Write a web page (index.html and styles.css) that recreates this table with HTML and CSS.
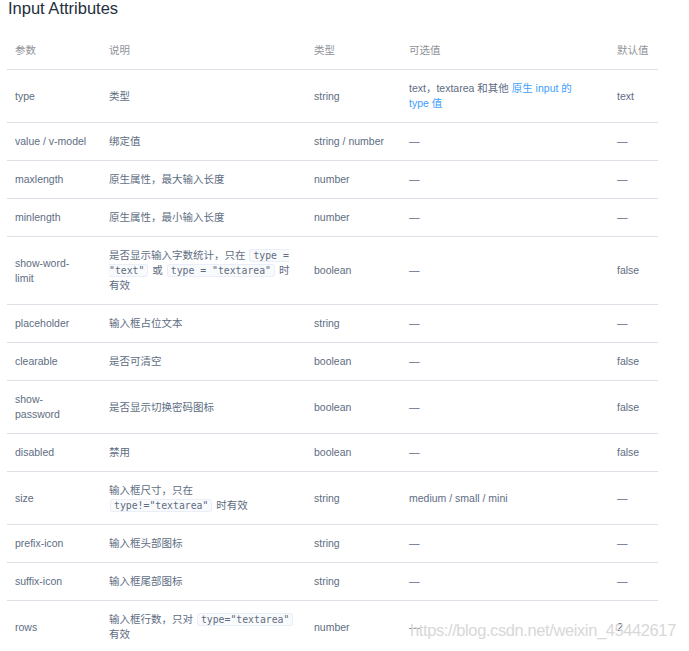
FILE: index.html
```html
<!DOCTYPE html>
<html lang="zh">
<head>
<meta charset="utf-8">
<title>Input Attributes</title>
<link rel="stylesheet" href="styles.css">
</head>
<body>
<div class="page">
  <h3 class="title">Input Attributes</h3>
  <table class="attrs">
    <colgroup>
      <col class="c1"><col class="c2"><col class="c3"><col class="c4"><col class="c5">
    </colgroup>
    <thead>
      <tr><th>参数</th><th>说明</th><th>类型</th><th>可选值</th><th>默认值</th></tr>
    </thead>
    <tbody>
      <tr><td>type</td><td>类型</td><td>string</td><td>text，textarea 和其他 <a class="link" href="#">原生 input 的 type 值</a></td><td>text</td></tr>
      <tr><td>value / v-model</td><td>绑定值</td><td>string / number</td><td>—</td><td>—</td></tr>
      <tr><td>maxlength</td><td>原生属性，最大输入长度</td><td>number</td><td>—</td><td>—</td></tr>
      <tr><td>minlength</td><td>原生属性，最小输入长度</td><td>number</td><td>—</td><td>—</td></tr>
      <tr><td>show-word-limit</td><td>是否显示输入字数统计，只在 <code>type = "text"</code> 或 <code>type = "textarea"</code> 时有效</td><td>boolean</td><td>—</td><td>false</td></tr>
      <tr><td>placeholder</td><td>输入框占位文本</td><td>string</td><td>—</td><td>—</td></tr>
      <tr><td>clearable</td><td>是否可清空</td><td>boolean</td><td>—</td><td>false</td></tr>
      <tr><td>show-password</td><td>是否显示切换密码图标</td><td>boolean</td><td>—</td><td>false</td></tr>
      <tr><td>disabled</td><td>禁用</td><td>boolean</td><td>—</td><td>false</td></tr>
      <tr><td>size</td><td>输入框尺寸，只在 <code>type!="textarea"</code> 时有效</td><td>string</td><td>medium / small / mini</td><td>—</td></tr>
      <tr><td>prefix-icon</td><td>输入框头部图标</td><td>string</td><td>—</td><td>—</td></tr>
      <tr><td>suffix-icon</td><td>输入框尾部图标</td><td>string</td><td>—</td><td>—</td></tr>
      <tr><td>rows</td><td>输入框行数，只对 <code>type="textarea"</code> 有效</td><td>number</td><td>—</td><td>2</td></tr>
    </tbody>
  </table>
  <div class="watermark">https://blog.csdn.net/weixin_45442617</div>
</div>
</body>
</html>
```
FILE: styles.css
```css
html, body {
  margin: 0;
  padding: 0;
  background: #ffffff;
}
body {
  font-family: "Liberation Sans", "Noto Sans CJK SC", sans-serif;
  overflow: hidden;
}
.page {
  position: relative;
  padding: 0 7px;
  height: 651px;
  overflow: hidden;
}
.title {
  margin: 0 0 15px 1px;
  font-size: 16.5px;
  line-height: 17px;
  font-weight: 400;
  color: #1f2f3d;
}
.attrs {
  border-collapse: collapse;
  table-layout: fixed;
  width: 651px;
  font-size: 10.5px;
  line-height: 15px;
}
.c1 { width: 91px; }
.c2 { width: 205px; }
.c3 { width: 95px; }
.c4 { width: 208px; }
.c5 { width: 52px; }
.attrs th,
.attrs td {
  text-align: left;
  vertical-align: middle;
  padding: 11px;
  border-bottom: 1px solid #dcdfe6;
}
.attrs th:first-child,
.attrs td:first-child {
  padding-left: 8px;
}
.attrs th:nth-child(2),
.attrs td:nth-child(2) {
  padding-right: 7px;
}
.attrs th:nth-child(4),
.attrs td:nth-child(4) {
  padding-right: 15px;
}
.attrs th:last-child,
.attrs td:last-child {
  padding-right: 2px;
  white-space: nowrap;
}
.attrs th {
  font-weight: 400;
  color: #909399;
}
.attrs td {
  color: #5e6d82;
}
.link {
  color: #409eff;
  text-decoration: none;
}
code {
  font-family: "DejaVu Sans Mono", "Liberation Mono", monospace;
  font-size: 9.8px;
  color: #5e6d82;
  background: #f9fafc;
  border: 1px solid #eaeefb;
  border-radius: 3px;
  padding: 0 3px;
  margin: 0 1px;
}
.watermark {
  position: absolute;
  left: 410px;
  top: 620px;
  font-size: 16.5px;
  line-height: 20px;
  letter-spacing: -0.4px;
  color: #d8d8d8;
  white-space: nowrap;
}
```
